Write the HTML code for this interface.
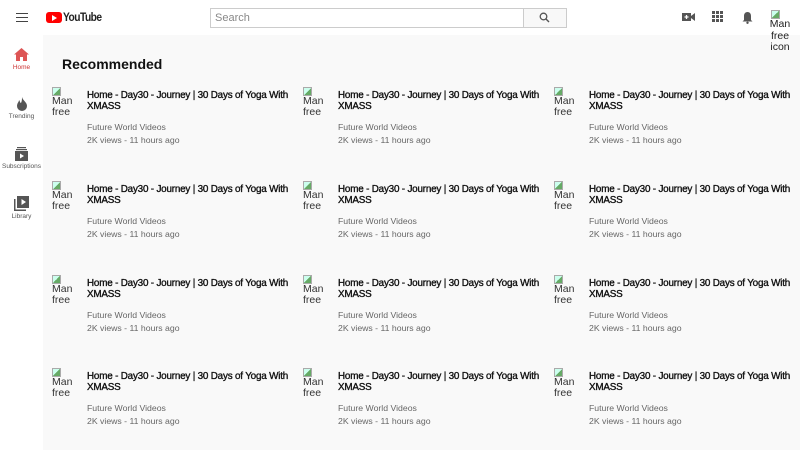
<!DOCTYPE html>
<html><head><style>
*{margin:0;padding:0;box-sizing:border-box}
body{width:800px;height:450px;overflow:hidden;background:#fff;font-family:"Liberation Sans",sans-serif;position:relative}
.main{position:absolute;left:43px;top:35px;width:757px;height:415px;background:#f9f9f9}
.abs{position:absolute}
.side{position:absolute;width:43px;text-align:center;font-size:6.5px;color:#555}
.card{position:absolute;width:245px;height:70px}
.img{position:absolute;left:0;top:0;width:22px;height:30px;overflow:hidden;font-size:10.5px;line-height:11px;color:#333}
.img i{display:block;width:9px;height:9px;border:1px solid #aaa;background:linear-gradient(135deg,#cfe 50%,#6a6 50%)}
.t{position:absolute;left:35px;top:3px;width:212px;font-size:9.9px;letter-spacing:-0.2px;line-height:11px;color:#111;-webkit-text-stroke:0.35px #111}
.c{position:absolute;left:35px;top:35px;font-size:8.7px;color:#666}
.v{position:absolute;left:35px;top:48px;font-size:8.7px;color:#666}
</style></head><body>
<div class="abs" style="left:16px;top:13px;width:12px;height:9px;border-top:1.5px solid #444;border-bottom:1.5px solid #444"><div style="margin-top:2.5px;border-top:1.5px solid #444"></div></div>
<div class="abs" style="left:46px;top:12px;width:16px;height:11px;background:#f00;border-radius:3px"></div>
<div class="abs" style="left:52px;top:15px;width:0;height:0;border-left:5px solid #fff;border-top:3px solid transparent;border-bottom:3px solid transparent"></div>
<div class="abs" style="left:63px;top:10px;font-size:12px;letter-spacing:-0.6px;color:#222;font-weight:bold;transform:scaleX(.85);transform-origin:left">YouTube</div>
<div class="abs" style="left:210px;top:8px;width:314px;height:20px;border:1px solid #ccc;font-size:11px;color:#888;padding:3px 4px">Search</div>
<div class="abs" style="left:523px;top:8px;width:44px;height:20px;border:1px solid #ccc;background:#f8f8f8"></div>
<svg class="abs" style="left:539px;top:12px" width="11" height="11" viewBox="0 0 11 11"><circle cx="4.5" cy="4.5" r="3.3" fill="none" stroke="#555" stroke-width="1.3"/><path d="M7 7l3 3" stroke="#555" stroke-width="1.4"/></svg>
<svg class="abs" style="left:682px;top:12px" width="13" height="10" viewBox="0 0 13 10"><rect x="0" y="1" width="9" height="8" fill="#555"/><path d="M9 4l4-3v8l-4-3z" fill="#555"/><path d="M4.5 3v4M2.5 5h4" stroke="#fff" stroke-width="1.3"/></svg>
<svg class="abs" style="left:712px;top:11px" width="11" height="11" viewBox="0 0 11 11" fill="#555"><rect x="0" y="0" width="3" height="3"/><rect x="4" y="0" width="3" height="3"/><rect x="8" y="0" width="3" height="3"/><rect x="0" y="4" width="3" height="3"/><rect x="4" y="4" width="3" height="3"/><rect x="8" y="4" width="3" height="3"/><rect x="0" y="8" width="3" height="3"/><rect x="4" y="8" width="3" height="3"/><rect x="8" y="8" width="3" height="3"/></svg>
<svg class="abs" style="left:742px;top:11px" width="11" height="13" viewBox="0 0 11 13"><path d="M5.5 1C3 1 2 3 2 5v4L0.5 10.5h10L9 9V5c0-2-1-4-3.5-4z" fill="#555"/><circle cx="5.5" cy="11.8" r="1.2" fill="#555"/></svg>
<div class="main"></div>
<div class="abs" style="left:768px;top:10px;font-size:10.5px;line-height:11.5px;color:#222;text-align:center;width:24px"><i style="display:block;width:9px;height:9px;margin-left:3px;border:1px solid #aaa;background:linear-gradient(135deg,#cfe 50%,#6a6 50%)"></i>Man free icon</div>
<div class="side" style="left:0;top:48px"><svg width="15" height="13" viewBox="0 0 15 13"><path d="M7.5 0L0 6.5h2V13h4V9h3v4h4V6.5h2z" fill="#d55"/></svg><div style="color:#c33;margin-top:1px">Home</div></div>
<div class="side" style="left:0;top:97px"><svg width="12" height="14" viewBox="0 0 12 14"><path d="M6 0C7 4 11 5 11 9a5 5 0 01-10 0c0-3 2-4 2-6 1 1 1 3 2 3 1-2 1-4 1-6z" fill="#555"/></svg><div>Trending</div></div>
<div class="side" style="left:0;top:147px"><svg width="13" height="14" viewBox="0 0 13 14" fill="#555"><rect x="2" y="0" width="9" height="1.2"/><rect x="1" y="2" width="11" height="1.2"/><rect x="0" y="4" width="13" height="10"/><path d="M5 6.5v5l4-2.5z" fill="#fff"/></svg><div>Subscriptions</div></div>
<div class="side" style="left:0;top:196px"><svg width="15" height="15" viewBox="0 0 15 15" fill="#555"><path d="M0 3h1.5v10.5H12V15H0z"/><rect x="3" y="0" width="12" height="12"/><path d="M7.5 3v6l4.5-3z" fill="#fff"/></svg><div>Library</div></div>
<div class="abs" style="left:62px;top:56px;font-size:14px;font-weight:bold;color:#111">Recommended</div>
<div id="g"></div>
<script>
var h='';[87,181,275,368].forEach(function(y){[52,303,554].forEach(function(x){h+='<div class="card" style="left:'+x+'px;top:'+y+'px"><div class="img"><i></i>Man<br>free</div><div class="t">Home - Day30 - Journey | 30 Days of Yoga With XMASS</div><div class="c">Future World Videos</div><div class="v">2K views - 11 hours ago</div></div>';});});document.getElementById('g').innerHTML=h;
</script>
</body></html>
